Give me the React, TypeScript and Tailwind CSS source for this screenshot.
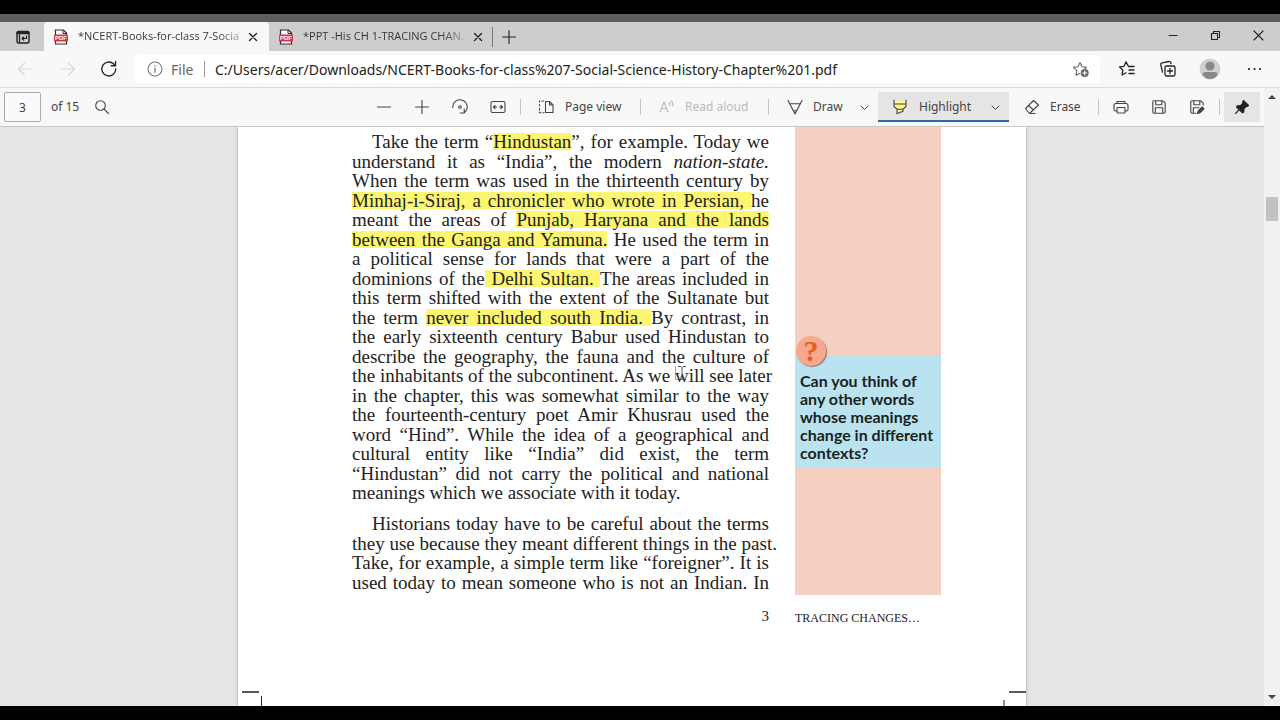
import type { ReactNode } from "react";

type IconProps = { children: ReactNode; className?: string; box?: number };

function Icon({ children, className = "size-4", box = 16 }: IconProps) {
  return (
    <svg
      viewBox={`0 0 ${box} ${box}`}
      className={`shrink-0 ${className}`}
      fill="none"
      stroke="currentColor"
      strokeWidth={1.1}
      strokeLinecap="round"
      strokeLinejoin="round"
      aria-hidden="true"
    >
      {children}
    </svg>
  );
}

const Cross = () => (
  <Icon className="size-[10px]" box={10}>
    <path d="M1.5 1.5l7 7M8.5 1.5l-7 7" strokeWidth={1.4} />
  </Icon>
);

const Chevron = () => (
  <Icon className="size-[9px]" box={9}>
    <path d="M1 3l3.500 3.500L8 3" strokeWidth={1} />
  </Icon>
);

const PdfIcon = () => (
  <svg viewBox="0 0 16 16" className="size-4 shrink-0" aria-hidden="true">
    <path d="M2.500 15V1h8l3 3v11z" fill="#fff" stroke="#3b2a2c" strokeWidth={1.200} />
    <path d="M10 1v3.500h3.500" fill="none" stroke="#3b2a2c" />
    <rect x="1" y="5.500" width="14" height="7" rx="1" fill="#d92f49" />
    <text x="8" y="11.200" textAnchor="middle" fontSize="6" fontWeight="700" fill="#fff" fontFamily="Liberation Sans, sans-serif">
      PDF
    </text>
  </svg>
);

function Tab({ title, active = false }: { title: string; active?: boolean }) {
  return (
    <div
      role="tab"
      aria-selected={active}
      className={`flex h-full items-center pl-[9px] ${active ? "w-[225px] rounded-t bg-[#f8f8f8]" : "w-[223px]"}`}
    >
      <PdfIcon />
      <span className="ml-[9px] w-[162px] bg-linear-to-r from-[#333] from-85% to-[#aaa] bg-clip-text font-['Open_Sans',sans-serif] text-[11px] whitespace-nowrap text-transparent">
        {title}
      </span>
      <button aria-label="Close tab" className="ml-2 text-[#222]">
        <Cross />
      </button>
    </div>
  );
}

function ToolButton({ label, children, className = "w-[38px]" }: { label: string; children: ReactNode; className?: string }) {
  return (
    <button aria-label={label} className={`flex h-[30px] shrink-0 items-center justify-center ${className}`}>
      {children}
    </button>
  );
}

const Divider = ({ className = "" }: { className?: string }) => (
  <span className={`h-4 w-px shrink-0 bg-[#c4c4c4] ${className}`} />
);

const Hl = ({ children }: { children: ReactNode }) => (
  <mark className="bg-transparent bg-[linear-gradient(#fdf671,#fdf671)] bg-[length:100%_17px] bg-center bg-no-repeat text-inherit">
    {children}
  </mark>
);

const firstParagraph: ReactNode[] = [
  <>Take the term “<Hl>Hindustan</Hl>”, for example. Today we</>,
  <>understand it as “India”, the modern <i>nation-state.</i></>,
  <>When the term was used in the thirteenth century by</>,
  <><Hl>Minhaj-i-Siraj, a chronicler who wrote in Persian, </Hl>he</>,
  <>meant the areas of <Hl>Punjab, Haryana and the lands</Hl></>,
  <><Hl>between the Ganga and Yamuna.</Hl> He used the term in</>,
  <>a political sense for lands that were a part of the</>,
  <>dominions of the<Hl> Delhi Sultan. </Hl>The areas included in</>,
  <>this term shifted with the extent of the Sultanate but</>,
  <>the term <Hl>never included south India. </Hl>By contrast, in</>,
  <>the early sixteenth century Babur used Hindustan to</>,
  <>describe the geography, the fauna and the culture of</>,
  <>the inhabitants of the subcontinent. As we will see later</>,
  <>in the chapter, this was somewhat similar to the way</>,
  <>the fourteenth-century poet Amir Khusrau used the</>,
  <>word “Hind”. While the idea of a geographical and</>,
  <>cultural entity like “India” did exist, the term</>,
  <>“Hindustan” did not carry the political and national</>,
];

const secondParagraph: ReactNode[] = [
  "Historians today have to be careful about the terms",
  "they use because they meant different things in the past.",
  "Take, for example, a simple term like “foreigner”. It is",
  "used today to mean someone who is not an Indian. In",
];

function Paragraph({ lines, last }: { lines: ReactNode[]; last?: string }) {
  return (
    <p>
      {lines.map((line, i) => (
        <span
          key={i}
          className="block whitespace-nowrap [text-align-last:justify] first:pl-5 odd:leading-5 even:leading-[19px]"
        >
          {line}
        </span>
      ))}
      {last && <span className="block leading-5">{last}</span>}
    </p>
  );
}

function TitleBar() {
  return (
    <div className="flex h-[29px] items-center bg-[#cdcdcd] text-[#222]">
      <button aria-label="Tab actions" className="flex w-11 justify-center pl-[2px]">
        <Icon>
          <rect x="2" y="2.500" width="12" height="11.500" rx="1.500" strokeWidth={1.400} />
          <path d="M2.500 4h11" strokeWidth={2.400} />
          <path d="M4.500 6v7" strokeWidth={1.300} />
          <path d="M11.500 7v2.500H7M8.700 7.800L7 9.500l1.700 1.700" strokeWidth={1.200} />
        </Icon>
      </button>
      <div role="tablist" className="flex h-full">
        <Tab title="*NCERT-Books-for-class 7-Social" active />
        <Tab title="*PPT -His CH 1-TRACING CHAN." />
      </div>
      <span className="h-5 w-px bg-[#777]" />
      <button aria-label="New tab" className="ml-2">
        <Icon>
          <path d="M8 1.500v13M1.500 8h13" />
        </Icon>
      </button>
      <div className="ml-auto flex h-[26px] items-center self-start">
        <button aria-label="Minimize" className="flex w-[43px] justify-center">
          <Icon className="size-[10px]" box={10}>
            <path d="M1 5.500h8" strokeWidth={1} />
          </Icon>
        </button>
        <button aria-label="Restore" className="flex w-[43px] justify-center">
          <Icon className="size-[11px]" box={11}>
            <path d="M1.500 3.500h6v6h-6zM3.500 3.200V1.500h6v6H7.800" />
          </Icon>
        </button>
        <button aria-label="Close" className="flex w-[43px] justify-center">
          <Icon className="size-[11px]" box={11}>
            <path d="M1 1l9 9M10 1l-9 9" />
          </Icon>
        </button>
      </div>
    </div>
  );
}

function AddressRow() {
  return (
    <div className="flex h-9 items-center bg-[#f8f8f8] text-[#222]">
      <button aria-label="Back" disabled className="flex w-[50px] justify-center text-[#d8d8d8]">
        <Icon>
          <path d="M15 8H1.500M7.500 2L1.500 8l6 6" />
        </Icon>
      </button>
      <button aria-label="Forward" disabled className="flex w-9 justify-center text-[#d8d8d8]">
        <Icon>
          <path d="M1 8h13.500M8.500 2l6 6-6 6" />
        </Icon>
      </button>
      <button aria-label="Refresh" className="ml-[5px] flex w-9 justify-center">
        <Icon className="size-[18px]">
          <path d="M14 8a6.200 6.200 0 1 1-2-4.600l1.500 1.400M13.800 1.300v3.800h-3.800" strokeWidth={1.200} />
        </Icon>
      </button>
      <div className="ml-2 flex h-7 flex-1 items-center rounded bg-white pr-[10px] pl-3">
        <Icon className="size-4 text-[#777]">
          <circle cx="8" cy="8" r="7" />
          <path d="M8 7.200v4M8 4.700v.2" strokeWidth={1.300} />
        </Icon>
        <span className="ml-2 w-[25px] text-[14px] text-[#666]">File</span>
        <span className="ml-2 h-4 w-px bg-[#999]" />
        <input
          aria-label="Address"
          readOnly
          value="C:/Users/acer/Downloads/NCERT-Books-for-class%207-Social-Science-History-Chapter%201.pdf"
          className="ml-[10px] min-w-0 flex-1 bg-transparent text-[14px] text-[#222] outline-none"
        />
        <button aria-label="Add to favorites" className="text-[#666]">
          <Icon className="size-[18px]" box={18}>
            <path d="M7.500 13.400L4 15.200l.8-4.500L1.500 7.400l4.500-.6L8 2.500l2 4.300 4.400.6-1.700 1.700" />
            <circle cx="12.700" cy="13" r="4" fill="currentColor" stroke="none" />
            <path d="M12.700 11v4M10.700 13h4" stroke="#fff" />
          </Icon>
        </button>
      </div>
      <button aria-label="Favorites" className="ml-[9px] flex w-9 justify-center">
        <Icon className="size-[18px]" box={18}>
          <path d="M10.500 6.500L8 1.800 6 6.300l-4.500.6 3.300 3.400L4 15l4-2.200M10.500 6.500H16M11 10h5M11 13.500h5" strokeWidth={1.300} />
        </Icon>
      </button>
      <button aria-label="Collections" className="ml-[5px] flex w-9 justify-center">
        <Icon className="size-[18px]" box={18}>
          <rect x="6" y="6" width="10" height="10" rx="1.500" strokeWidth={1.300} />
          <path d="M11 8.500v5M8.500 11h5M3.500 12.200L1.800 4.800a1.500 1.500 0 0 1 1.200-2L10 1.500a1.500 1.500 0 0 1 1.800 1.200l.2 1" strokeWidth={1.300} />
        </Icon>
      </button>
      <button aria-label="Profile" className="ml-[13px]">
        <svg viewBox="0 0 22 22" className="size-[22px]" aria-hidden="true">
          <circle cx="11" cy="11" r="10.500" fill="#d2d0ce" />
          <circle cx="11" cy="8" r="4.600" fill="#8a8886" />
          <path d="M3.500 16.500q0-2.500 3-2.500h9q3 0 3 2.500Q16 21 11 21t-7.500-4.500z" fill="#8a8886" />
        </svg>
      </button>
      <button aria-label="Settings and more" className="mr-[18px] ml-[25px]">
        <Icon>
          <path d="M3 8h.01M8.500 8h.01M14 8h.01" strokeWidth={2.200} />
        </Icon>
      </button>
    </div>
  );
}

function PdfToolbar() {
  return (
    <div className="flex h-[39px] shrink-0 items-center border-b border-[#c8c8c8] bg-[#f8f8f8] text-[12px] text-[#444]">
      <input
        id="page-number"
        aria-label="Page number"
        defaultValue="3"
        className="ml-1 h-[30px] w-[37px] rounded-xs border border-[#aaa] bg-[#fafafa] text-center outline-none"
      />
      <label htmlFor="page-number" className="ml-[10px] w-[26px] whitespace-nowrap">
        of 15
      </label>
      <ToolButton label="Find">
        <Icon className="ml-[12px] size-4">
          <circle cx="6.500" cy="6.500" r="4.800" />
          <path d="M10.200 10.200l4.300 4.300" />
        </Icon>
      </ToolButton>
      <div className="ml-auto flex items-center">
        <ToolButton label="Zoom out">
          <Icon>
            <path d="M1.500 8h13" />
          </Icon>
        </ToolButton>
        <ToolButton label="Zoom in">
          <Icon>
            <path d="M8 1.500v13M1.500 8h13" />
          </Icon>
        </ToolButton>
        <ToolButton label="Rotate">
          <Icon className="size-[18px]" box={18}>
            <path d="M1.800 9.500a7.200 7.200 0 1 1 11.600 5.200M13.200 10.800v4.200H9.200" />
            <circle cx="9" cy="9" r="1.300" />
          </Icon>
        </ToolButton>
        <ToolButton label="Fit to width">
          <Icon>
            <rect x="1" y="2.500" width="14" height="11" rx="1.500" />
            <path d="M3.500 8h3M5 6.500L3.500 8 5 9.500M12.500 8h-3M11 6.500L12.500 8 11 9.500" />
          </Icon>
        </ToolButton>
        <Divider className="ml-[3px]" />
        <button className="flex h-[30px] w-[119px] items-center gap-[11px] pl-[17px] whitespace-nowrap">
          <Icon>
            <path d="M5.500 2H4M2 2h-.5v1M1.500 5.500v1.500M1.500 9.500V11M1.500 13v.8H3M5 13.800h1" />
            <path d="M7.500 2.500h4l3.500 3.500v7.500H7.500zM11.500 2.500V6H15" />
          </Icon>
          Page view
        </button>
        <Divider />
        <button disabled className="flex h-[30px] w-[127px] items-center gap-[10px] pl-[18px] whitespace-nowrap text-[#bbb]">
          <Icon>
            <path d="M1 13L5 3l4 10M2.500 9.500h5M10 3.500q1.500 1 1 3M12 2q2.500 1.500 1.800 4.800" />
          </Icon>
          Read aloud
        </button>
        <Divider />
        <button className="flex h-[30px] w-[109px] items-center gap-[10px] pr-[9px] pl-[18px]">
          <Icon>
            <path d="M1 1.500l5.500 10.500L8 15l1.500-3L15 1.500M2.800 4.800h10.400M6.300 11.800h3.400" />
          </Icon>
          Draw
          <span className="ml-auto">
            <Chevron />
          </span>
        </button>
        <button
          aria-pressed="true"
          className="flex h-[30px] w-[131px] items-center gap-[11px] bg-[#e5e5e5] pr-[9px] pl-[14px] shadow-[inset_0_-2px_0_#2c6aa3]"
        >
          <Icon>
            <path d="M2.200 1.500h11.600V7.500l-3 2.700v2.500l-5.800 2.300v-4.800L2.200 7.500z" fill="#fdf48a" stroke="none" />
            <path d="M2 1v6.500l3 2.700v4.600l6-2.600v-2l3-2.700V1M2 5h12M5 10.300h6" />
          </Icon>
          Highlight
          <span className="ml-auto">
            <Chevron />
          </span>
        </button>
        <button className="flex h-[30px] w-[89px] items-center gap-[10px] pl-[15px]">
          <Icon>
            <path d="M1.500 9.500L9.500 1.500l5 4.500-8.500 8H5zM4.500 6.500l5 4.500M6 14.500h5" />
          </Icon>
          Erase
        </button>
        <Divider />
        <ToolButton label="Print" className="ml-[3px] w-[38px]">
          <Icon>
            <path d="M4 4.500v-2h8v2M4 12H2.500Q1 12 1 10.500v-4q0-2 2-2h10q2 0 2 2v4q0 1.500-1.500 1.500H12" />
            <rect x="4" y="8.500" width="8" height="5.500" rx=".8" />
          </Icon>
        </ToolButton>
        <ToolButton label="Save">
          <Icon>
            <path d="M3 1.800h8.800l2.400 2.400V13q0 1.200-1.200 1.200H3Q1.800 14.200 1.800 13V3Q1.800 1.800 3 1.800zM4.800 2v3.700h6V2M4.300 14V8.800h7.400V14" />
          </Icon>
        </ToolButton>
        <ToolButton label="Save as">
          <Icon>
            <path d="M14.200 6V4.200l-2.400-2.400H3Q1.800 1.800 1.800 3v10q0 1.200 1.200 1.200h4M4.800 2v3.700h6V2M4.300 14V8.800H10" />
            <path d="M8.500 14.500l.7-2.500 4-4 1.800 1.800-4 4z" fill="currentColor" />
          </Icon>
        </ToolButton>
        <Divider className="ml-[3px]" />
        <ToolButton label="Pin toolbar" className="mr-1 ml-1 w-9 bg-[#e5e5e5] text-[#222]">
          <Icon>
            <path d="M9.500 1.500l5 5-1.300 1-.8-.1-2.500 2.500-.1 3-1.300 1L2.500 8l1-1.300 3-.1L9 4.100l-.4-1.300zM5.300 10.700L1.500 14.500" fill="currentColor" />
          </Icon>
        </ToolButton>
      </div>
    </div>
  );
}

function DocumentPage() {
  return (
    <article className="relative mx-auto flex h-full w-[788px] flex-col bg-white font-['Liberation_Serif',serif] text-[#222] shadow-[0_0_3px_#999]">
      <div className="flex gap-[26px] pl-[114px]">
        <div className="flex w-[417px] flex-col gap-[11px] pt-[5px] text-[19px]">
          <Paragraph lines={firstParagraph} last="meanings which we associate with it today." />
          <Paragraph lines={secondParagraph} />
        </div>
        <aside className="flex h-[468px] w-[146px] flex-col bg-[#f5cfc2] pt-[229px]">
          <div className="relative bg-[#bbe3ef] px-[5px] pt-4 pb-[5px] font-['Lato',sans-serif] text-[16px] leading-[18px] font-bold whitespace-nowrap text-[#1a1f22]">
            <span className="absolute -top-5 left-px flex size-[30px] items-center justify-center rounded-full bg-[#f8a98d] font-['Liberation_Serif',serif] text-[30px] text-[#e2601f] shadow-[1px_1px_1px_#8a7a76]">
              ?
            </span>
            Can you think of
            <br />
            any other words
            <br />
            whose meanings
            <br />
            change in different
            <br />
            contexts?
          </div>
        </aside>
      </div>
      <div className="mt-[11px] flex gap-[26px] pl-[114px]">
        <span className="w-[417px] text-right text-[15px] leading-5">3</span>
        <span className="pt-[2px] text-[12px] leading-5">TRACING CHANGES…</span>
      </div>
      <div className="mt-auto flex justify-between text-[#222]">
        <svg viewBox="0 0 26 16" className="h-4 w-[26px]" stroke="currentColor" aria-hidden="true">
          <path d="M4 2h17" strokeWidth={1.500} />
          <path d="M23.500 6v10" />
        </svg>
        <svg viewBox="0 0 26 16" className="h-4 w-[26px]" stroke="currentColor" aria-hidden="true">
          <path d="M9 2h17" strokeWidth={1.500} />
          <path d="M4 10v6" />
        </svg>
      </div>
      <svg
        viewBox="0 0 14 16"
        className="absolute top-[238px] left-[436px] h-4 w-[14px]"
        fill="none"
        stroke="#555"
        aria-hidden="true"
      >
        <path d="M1.500 1.500v13h6" strokeDasharray="1 1" />
        <path d="M4 1.500h3l1 1 1-1h3M8 2.500v11M5.500 14.500h2l.5-1 .5 1h2" />
      </svg>
    </article>
  );
}

export default function App() {
  return (
    <div className="flex h-screen flex-col overflow-hidden bg-black py-[14px] font-['Noto_Sans','Open_Sans',sans-serif]">
      <div className="h-2 shrink-0 bg-[#5e5e5e]" />
      <header className="shrink-0 border-b border-[#dcdcdc]">
        <TitleBar />
        <AddressRow />
      </header>
      <div className="flex min-h-0 flex-1">
        <div className="flex min-w-0 flex-1 flex-col">
          <PdfToolbar />
          <main className="min-h-0 flex-1 overflow-hidden bg-[#e5e5e5]">
            <DocumentPage />
          </main>
        </div>
        <div className="flex w-4 flex-col items-center bg-[#f1f1f1] py-[5px] text-[#444]">
          <svg viewBox="0 0 8 8" className="size-2" fill="currentColor" aria-hidden="true">
            <path d="M0 6l4-4 4 4z" />
          </svg>
          <span className="mt-24 h-6 w-3 bg-[#c1c1c1]" />
          <svg viewBox="0 0 8 8" className="mt-auto size-2" fill="currentColor" aria-hidden="true">
            <path d="M0 2l4 4 4-4z" />
          </svg>
        </div>
      </div>
    </div>
  );
}
